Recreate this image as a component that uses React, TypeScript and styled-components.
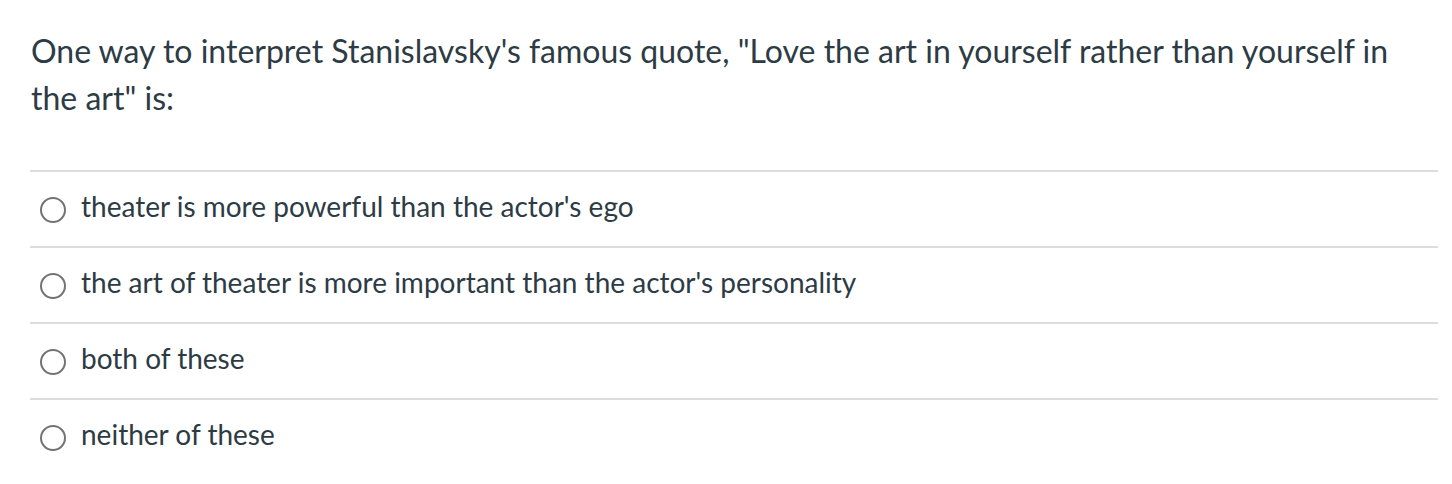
import React from 'react';
import styled, { createGlobalStyle } from 'styled-components';

const GlobalStyle = createGlobalStyle`
  body {
    margin: 0;
    background: #ffffff;
    font-family: Lato, "Noto Sans", sans-serif;
    color: #2d3b45;
  }
`;

const QuestionContainer = styled.section`
  width: 1408px;
  padding: 27px 0 0 30px;
`;

const QuestionText = styled.p`
  margin: 0 0 49px 1px;
  font-size: 32px;
  line-height: 47px;
  font-weight: 400;
`;

const AnswerList = styled.div`
  display: flex;
  flex-direction: column;
`;

const AnswerRow = styled.label`
  display: flex;
  align-items: center;
  height: 74px;
  border-top: 2px solid #dcdcdc;
  padding-left: 10px;
  gap: 15px;
  cursor: pointer;
`;

const Radio = styled.span`
  box-sizing: border-box;
  width: 26px;
  height: 26px;
  border-radius: 50%;
  border: 2px solid #737373;
  flex-shrink: 0;
  margin-top: 2px;
`;

const AnswerText = styled.span`
  font-size: 28px;
  line-height: 36px;
  padding-bottom: 6px;
`;

const answers = [
  "theater is more powerful than the actor's ego",
  "the art of theater is more important than the actor's personality",
  'both of these',
  'neither of these',
];

const App: React.FC = () => {
  return (
    <>
      <GlobalStyle />
      <QuestionContainer>
        <QuestionText>
          One way to interpret Stanislavsky's famous quote, "Love the art in yourself rather than yourself in the art" is:
        </QuestionText>
        <AnswerList>
          {answers.map((a) => (
            <AnswerRow key={a}>
              <Radio />
              <AnswerText>{a}</AnswerText>
            </AnswerRow>
          ))}
        </AnswerList>
      </QuestionContainer>
    </>
  );
};

export default App;
